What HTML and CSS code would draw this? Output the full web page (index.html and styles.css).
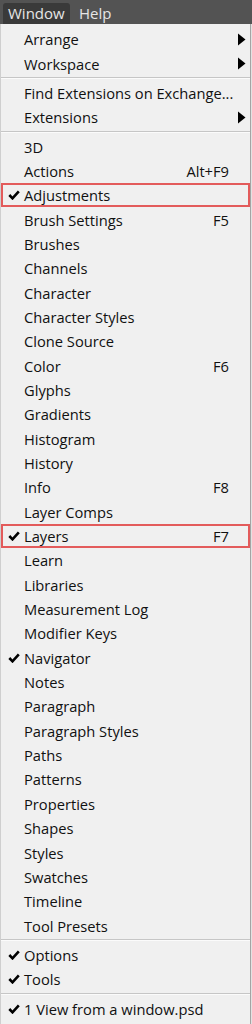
FILE: index.html
```html
<!DOCTYPE html>
<html>
<head>
<meta charset="utf-8">
<link rel="stylesheet" href="styles.css">
</head>
<body>
<div class="menubar">
  <span class="top-item active">Window</span>
  <span class="top-item">Help</span>
</div>
<div class="panel-wrap">
<div class="panel">
  <div class="row"><span class="gut"></span><span class="lbl">Arrange</span><span class="sc"></span><span class="arr"><svg width="9" height="13" viewBox="0 0 9 13"><path d="M1 0.5 L8.5 6.5 L1 12.5 Z" fill="#000"/></svg></span></div>
  <div class="row"><span class="gut"></span><span class="lbl">Workspace</span><span class="sc"></span><span class="arr"><svg width="9" height="13" viewBox="0 0 9 13"><path d="M1 0.5 L8.5 6.5 L1 12.5 Z" fill="#000"/></svg></span></div>
  <div class="sep"></div>
  <div class="row"><span class="gut"></span><span class="lbl">Find Extensions on Exchange...</span><span class="sc"></span><span class="arr"></span></div>
  <div class="row"><span class="gut"></span><span class="lbl">Extensions</span><span class="sc"></span><span class="arr"><svg width="9" height="13" viewBox="0 0 9 13"><path d="M1 0.5 L8.5 6.5 L1 12.5 Z" fill="#000"/></svg></span></div>
  <div class="sep"></div>
  <div class="row"><span class="gut"></span><span class="lbl">3D</span><span class="sc"></span><span class="arr"></span></div>
  <div class="row"><span class="gut"></span><span class="lbl">Actions</span><span class="sc">Alt+F9</span><span class="arr"></span></div>
  <div class="row marked"><span class="gut"><svg class="chk" width="12" height="10" viewBox="0 0 12 10"><path d="M1.3 5 L4.5 8.3 L10.8 1.3" fill="none" stroke="#000" stroke-width="2.6"/></svg></span><span class="lbl">Adjustments</span><span class="sc"></span><span class="arr"></span></div>
  <div class="row"><span class="gut"></span><span class="lbl">Brush Settings</span><span class="sc">F5</span><span class="arr"></span></div>
  <div class="row"><span class="gut"></span><span class="lbl">Brushes</span><span class="sc"></span><span class="arr"></span></div>
  <div class="row"><span class="gut"></span><span class="lbl">Channels</span><span class="sc"></span><span class="arr"></span></div>
  <div class="row"><span class="gut"></span><span class="lbl">Character</span><span class="sc"></span><span class="arr"></span></div>
  <div class="row"><span class="gut"></span><span class="lbl">Character Styles</span><span class="sc"></span><span class="arr"></span></div>
  <div class="row"><span class="gut"></span><span class="lbl">Clone Source</span><span class="sc"></span><span class="arr"></span></div>
  <div class="row"><span class="gut"></span><span class="lbl">Color</span><span class="sc">F6</span><span class="arr"></span></div>
  <div class="row"><span class="gut"></span><span class="lbl">Glyphs</span><span class="sc"></span><span class="arr"></span></div>
  <div class="row"><span class="gut"></span><span class="lbl">Gradients</span><span class="sc"></span><span class="arr"></span></div>
  <div class="row"><span class="gut"></span><span class="lbl">Histogram</span><span class="sc"></span><span class="arr"></span></div>
  <div class="row"><span class="gut"></span><span class="lbl">History</span><span class="sc"></span><span class="arr"></span></div>
  <div class="row"><span class="gut"></span><span class="lbl">Info</span><span class="sc">F8</span><span class="arr"></span></div>
  <div class="row"><span class="gut"></span><span class="lbl">Layer Comps</span><span class="sc"></span><span class="arr"></span></div>
  <div class="row marked"><span class="gut"><svg class="chk" width="12" height="10" viewBox="0 0 12 10"><path d="M1.3 5 L4.5 8.3 L10.8 1.3" fill="none" stroke="#000" stroke-width="2.6"/></svg></span><span class="lbl">Layers</span><span class="sc">F7</span><span class="arr"></span></div>
  <div class="row"><span class="gut"></span><span class="lbl">Learn</span><span class="sc"></span><span class="arr"></span></div>
  <div class="row"><span class="gut"></span><span class="lbl">Libraries</span><span class="sc"></span><span class="arr"></span></div>
  <div class="row"><span class="gut"></span><span class="lbl">Measurement Log</span><span class="sc"></span><span class="arr"></span></div>
  <div class="row"><span class="gut"></span><span class="lbl">Modifier Keys</span><span class="sc"></span><span class="arr"></span></div>
  <div class="row"><span class="gut"><svg class="chk" width="12" height="10" viewBox="0 0 12 10"><path d="M1.3 5 L4.5 8.3 L10.8 1.3" fill="none" stroke="#000" stroke-width="2.6"/></svg></span><span class="lbl">Navigator</span><span class="sc"></span><span class="arr"></span></div>
  <div class="row"><span class="gut"></span><span class="lbl">Notes</span><span class="sc"></span><span class="arr"></span></div>
  <div class="row"><span class="gut"></span><span class="lbl">Paragraph</span><span class="sc"></span><span class="arr"></span></div>
  <div class="row"><span class="gut"></span><span class="lbl">Paragraph Styles</span><span class="sc"></span><span class="arr"></span></div>
  <div class="row"><span class="gut"></span><span class="lbl">Paths</span><span class="sc"></span><span class="arr"></span></div>
  <div class="row"><span class="gut"></span><span class="lbl">Patterns</span><span class="sc"></span><span class="arr"></span></div>
  <div class="row"><span class="gut"></span><span class="lbl">Properties</span><span class="sc"></span><span class="arr"></span></div>
  <div class="row"><span class="gut"></span><span class="lbl">Shapes</span><span class="sc"></span><span class="arr"></span></div>
  <div class="row"><span class="gut"></span><span class="lbl">Styles</span><span class="sc"></span><span class="arr"></span></div>
  <div class="row"><span class="gut"></span><span class="lbl">Swatches</span><span class="sc"></span><span class="arr"></span></div>
  <div class="row"><span class="gut"></span><span class="lbl">Timeline</span><span class="sc"></span><span class="arr"></span></div>
  <div class="row"><span class="gut"></span><span class="lbl">Tool Presets</span><span class="sc"></span><span class="arr"></span></div>
  <div class="sep"></div>
  <div class="row"><span class="gut"><svg class="chk" width="12" height="10" viewBox="0 0 12 10"><path d="M1.3 5 L4.5 8.3 L10.8 1.3" fill="none" stroke="#000" stroke-width="2.6"/></svg></span><span class="lbl">Options</span><span class="sc"></span><span class="arr"></span></div>
  <div class="row"><span class="gut"><svg class="chk" width="12" height="10" viewBox="0 0 12 10"><path d="M1.3 5 L4.5 8.3 L10.8 1.3" fill="none" stroke="#000" stroke-width="2.6"/></svg></span><span class="lbl">Tools</span><span class="sc"></span><span class="arr"></span></div>
  <div class="sep"></div>
  <div class="row"><span class="gut"><svg class="chk" width="12" height="10" viewBox="0 0 12 10"><path d="M1.3 5 L4.5 8.3 L10.8 1.3" fill="none" stroke="#000" stroke-width="2.6"/></svg></span><span class="lbl">1 View from a window.psd</span><span class="sc"></span><span class="arr"></span></div>
</div>
</div>
</body>
</html>
```

FILE: styles.css
```css
html, body {
  margin: 0;
  padding: 0;
  background: #f0f0f0;
}
body {
  width: 252px;
  height: 1024px;
  overflow: hidden;
  font-family: "Open Sans", "Noto Sans", sans-serif;
  font-size: 14.7px;
  color: #111;
}
.menubar {
  height: 24px;
  background: #535353;
  display: flex;
  align-items: flex-end;
  padding-left: 3px;
  box-sizing: border-box;
}
.top-item {
  height: 21px;
  line-height: 21px;
  padding: 0 6px 0 5px;
  color: #e6e6e6;
  font-size: 15px;
  margin-right: 4px;
}
.top-item.active {
  background: #3a3a3a;
  border-radius: 3px 3px 0 0;
  width: 56px;
}
.panel-wrap {
  background: #e2e2e2;
  padding-right: 1px;
  height: 1000px;
}
.panel {
  background: #f0f0f0;
  border-left: 1px solid #cfcfcf;
  border-right: 1px solid #a4a4a4;
  height: 1000px;
  padding-top: 3px;
  box-sizing: border-box;
}
.row {
  height: 24.35px;
  display: grid;
  grid-template-columns: 23px 1fr auto 21px;
  align-items: center;
  box-sizing: border-box;
  white-space: nowrap;
}
.row.marked {
  box-shadow: inset 0 0 0 2px #e35b5b;
}
.gut {
  display: flex;
  justify-content: center;
  align-items: center;
  padding-left: 3px;
}
.sc {
  text-align: right;
}
.arr {
  display: flex;
  justify-content: center;
  align-items: center;
  padding-left: 3px;
}
.sep {
  height: 5px;
  display: flex;
  flex-direction: column;
  justify-content: center;
}
.sep::before {
  content: "";
  display: block;
  height: 1px;
  background: #c6c6c6;
}
.sep::after {
  content: "";
  display: block;
  height: 1px;
  background: #fbfbfb;
}
```
